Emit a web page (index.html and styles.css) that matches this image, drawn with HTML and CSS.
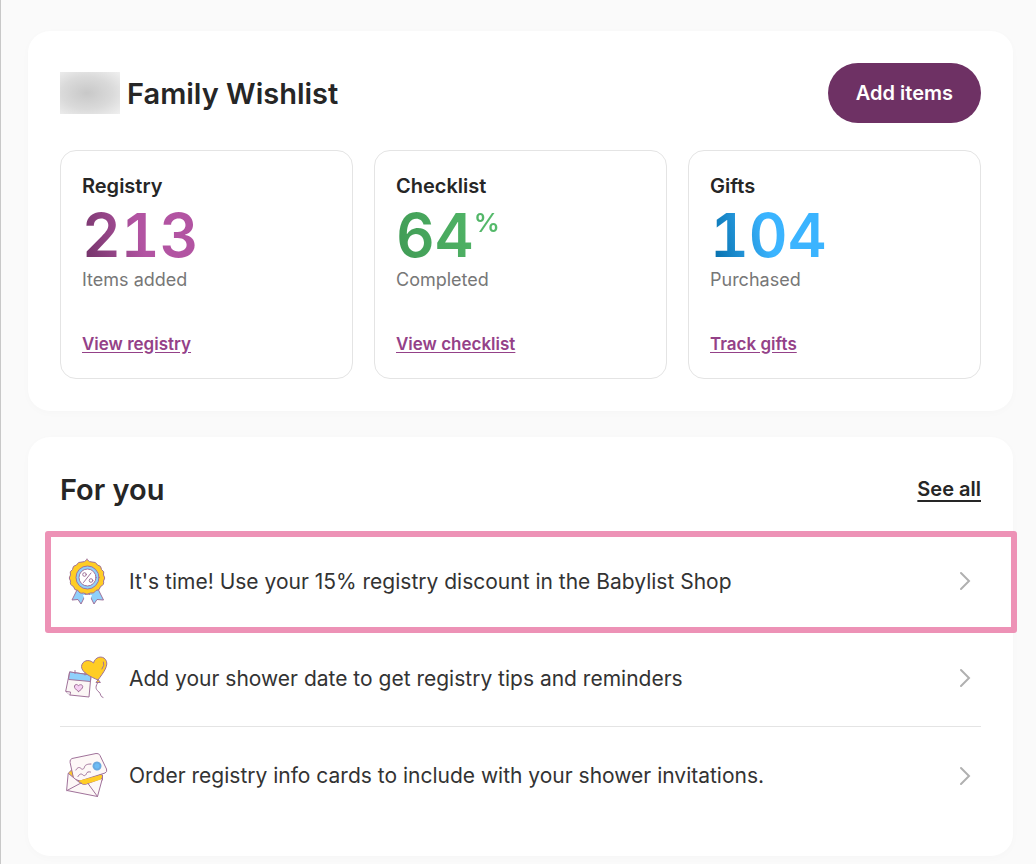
FILE: index.html
```html
<!DOCTYPE html>
<html lang="en">
<head>
  <meta charset="UTF-8">
  <meta name="viewport" content="width=device-width, initial-scale=1.0">
  <title>Family Wishlist</title>
  <link rel="stylesheet" href="styles.css">
</head>
<body>
  <main class="page">
    <section class="panel">
      <div class="panel-header">
        <h1><span class="hidden-name"></span>Family Wishlist</h1>
        <button type="button" class="add-btn">Add items</button>
      </div>

      <div class="stats">
        <div class="stat">
          <h2>Registry</h2>
          <p class="number purple">213</p>
          <p class="caption">Items added</p>
          <a href="#">View registry</a>
        </div>
        <div class="stat">
          <h2>Checklist</h2>
          <p class="number green">64<span class="percent">%</span></p>
          <p class="caption">Completed</p>
          <a href="#">View checklist</a>
        </div>
        <div class="stat">
          <h2>Gifts</h2>
          <p class="number blue">104</p>
          <p class="caption">Purchased</p>
          <a href="#">Track gifts</a>
        </div>
      </div>
    </section>

    <section class="panel">
      <div class="panel-header for-you">
        <h1>For you</h1>
        <a href="#" class="see-all">See all</a>
      </div>

      <div class="tasks">
        <a href="#" class="task highlighted">
          <!-- Discount rosette -->
          <svg class="icon" viewBox="0 0 48 48">
            <path d="M14 33l-5 10 6-.5 3 4.500 5-10h3l5 10 3-4.500 6.500.5-5-10z" fill="#8fd0fb"/>
            <path d="M20 38h9l-2 5h-5z" fill="#fff" stroke="none"/>
            <path d="M24 2.500q2.500 3 5 2.500 4-.5 5.500 3 4 .5 4 4.500 3.500 2 2 5.500 2.500 3 0 6 1 4-3 5.500-.5 4-4.500 4-2 3.500-5.500 2.500-3.500 2.500-7 0-4 1-5.500-2.500-4 0-4.500-4-4-1.500-3-5.500-2.500-3 0-6-1.500-3.500 2-5.500 0-4 4-4.500 1.500-3.500 5.500-3 2.500.5 5-2.500z" fill="#ffcd25"/>
            <circle cx="24.500" cy="20.500" r="11.500" fill="#8fd0fb"/>
            <circle cx="24.500" cy="20.500" r="8.500" fill="#fff"/>
            <path d="M28 16l-7.500 9.500"/>
            <circle cx="21.500" cy="17.500" r="1.800"/>
            <circle cx="28" cy="23.500" r="1.800"/>
          </svg>
          <span class="task-text">It's time! Use your 15% registry discount in the Babylist Shop</span>
          <svg class="chevron" viewBox="0 0 12 20"><path d="M2 2l8 8-8 8"/></svg>
        </a>
        <a href="#" class="task">
          <!-- Calendar with balloon -->
          <svg class="icon" viewBox="0 0 48 48">
            <path d="M7 18l21 3-2 22-19-2-4-3.500z" fill="#fbf6f5"/>
            <path d="M7 18l21 3-.5 6.500-21.500-2z" fill="#8fd0fb"/>
            <path d="M3 37.500l4.500.5-.5 3" fill="#fff"/>
            <path d="M12 16.500v3M22 18v3"/>
            <path d="M15.500 37.500c-3-2-4.500-4-4-5.500.5-2 3-2 4-.2 1.500-1.800 4-1.300 4.200.7 0 2-2 3.700-4.200 5z" fill="#f6d0f3"/>
            <path d="M35 26c-7-3-16.500-7.500-16.500-13.500.5-6 7.500-8 12-3.500 1.500-6 8.500-8 12-3.500 4 5.500-2 13-7.500 20.500z" fill="#ffcd25"/>
            <path d="M40.500 8q1.500 3-1.500 7"/>
            <path d="M35 26l-2 2.500h4z" fill="#ffcd25"/>
            <path d="M34.500 29c-3 5-1 7 1.500 9 2 1.500 1 5 4 5.500"/>
          </svg>
          <span class="task-text">Add your shower date to get registry tips and reminders</span>
          <svg class="chevron" viewBox="0 0 12 20"><path d="M2 2l8 8-8 8"/></svg>
        </a>
        <a href="#" class="task">
          <!-- Open envelope with card -->
          <svg class="icon" viewBox="0 0 48 48">
            <path d="M5.500 21l3-3 31 5v5l-20 6z" fill="#ffcd25"/>
            <path d="M7 10q-.5-2.500 2-3.500L33 1.500q3-.5 4 2L43.500 17q1 3-1.500 4L17 29l-6-2z" fill="#fdf8f7"/>
            <path d="M13 18c1.500-3 3.500-3 5-1.500s3 .5 3.500-1.500 2.500-3 6.500-3"/>
            <path d="M15 24.500c1.500-3 3.500-3 5-1.500s3 0 3.500-1.500 2-2 4-1.500"/>
            <circle cx="34" cy="14" r="3.500" fill="#6cbcf5" stroke="#69a9e0" stroke-width="2" stroke-dasharray="2 1"/>
            <path d="M5.500 21.500l11 9q4 3 7 1.500l16-6-5 18.500-30.500-6z" fill="#fdf8f7"/>
            <path d="M16.500 28.500l22-5.500-.5 4.500-15 4.500q-4 .5-6.500-3.500z" fill="#ffcd25" stroke="none"/>
            <path d="M4 38.500L18 31M25 31.500l9.500 13"/>
          </svg>
          <span class="task-text">Order registry info cards to include with your shower invitations.</span>
          <svg class="chevron" viewBox="0 0 12 20"><path d="M2 2l8 8-8 8"/></svg>
        </a>
      </div>
    </section>
  </main>
</body>
</html>
```
FILE: styles.css
```css
* {
    box-sizing: border-box;
}

body {
    margin: 0;
    font-family: Inter, "Liberation Sans", sans-serif;
    background: #fafafa;
    color: #262626;
}

.page {
    display: flex;
    flex-direction: column;
    gap: 26px;
    min-height: 100vh;
    padding: 31px 23px 8px 27px;
    border-left: 1px solid #c8c8c8;
    border-bottom: 1px solid #d8d8d8;
}

.panel {
    padding: 32px;
    background: #fff;
    border-radius: 22px;
    box-shadow: 0 2px 8px rgba(0, 0, 0, 0.02);
}

.panel-header {
    display: flex;
    justify-content: space-between;
    align-items: center;
    margin-bottom: 27px;
}

.for-you {
    height: 40px;
    margin-bottom: 24px;
}

h1 {
    display: flex;
    align-items: center;
    gap: 7px;
    margin: 0;
    font-size: 29px;
    font-weight: 600;
}

.hidden-name {
    width: 60px;
    height: 42px;
    background: radial-gradient(ellipse at 45% 50%, #c8c8c8, #dadada 55%, #f0f0f0 100%);
}

.add-btn {
    height: 60px;
    padding: 0 28px;
    border: none;
    border-radius: 30px;
    background: #6e3164;
    color: #fff;
    font-family: inherit;
    font-size: 20px;
    font-weight: 600;
    cursor: pointer;
}

/* Stat cards */
.stats {
    display: grid;
    grid-template-columns: repeat(3, 1fr);
    gap: 21px;
}

.stat {
    display: flex;
    flex-direction: column;
    align-items: flex-start;
    padding: 21px;
    border: 1px solid #e4e4e4;
    border-radius: 16px;
}

.stat h2 {
    margin: 0;
    font-size: 20px;
    line-height: 28px;
    font-weight: 600;
}

.stat a {
    margin-top: 42px;
    color: #944188;
    font-size: 17px;
    line-height: 26px;
    font-weight: 600;
    text-underline-offset: 2px;
}

.number {
    display: flex;
    margin: 0;
    font-size: 60px;
    line-height: 70px;
    font-weight: 600;
    font-variant-numeric: tabular-nums;
    color: transparent;
    background-clip: text;
    -webkit-background-clip: text;
}

.percent {
    font-size: 26px;
    line-height: 46px;
}

.purple {
    background-image: linear-gradient(75deg, #6e3164, #b254a2 50%);
}

.green {
    background-image: linear-gradient(75deg, #3f9a54, #57bd6d);
}

.blue {
    background-image: linear-gradient(75deg, #0068a3, #3bb4ff 50%);
}

.caption {
    margin: 0;
    color: #777;
    font-size: 18px;
    line-height: 19px;
}

.see-all {
    color: #262626;
    font-size: 20px;
    font-weight: 600;
    text-underline-offset: 4px;
}

/* Task list */
.task {
    position: relative;
    display: flex;
    align-items: center;
    height: 97px;
    padding: 0 10px 0 3px;
    color: #333;
    font-size: 21px;
    text-decoration: none;
    border-bottom: 1px solid #e4e4e4;
}

.task:last-child {
    border-bottom: none;
}

.highlighted::after {
    content: "";
    position: absolute;
    inset: -2px -36px -4px -15px;
    border: 6px solid #ed92b6;
    border-radius: 3px;
}

.icon {
    flex: none;
    width: 48px;
    height: 48px;
    margin-right: 18px;
    fill: none;
    stroke: #a0729a;
    stroke-linejoin: round;
    stroke-linecap: round;
}

.task-text {
    flex: 1;
}

.chevron {
    width: 12px;
    height: 20px;
    fill: none;
    stroke: #b0b0b0;
    stroke-width: 2;
    stroke-linecap: round;
}
```
